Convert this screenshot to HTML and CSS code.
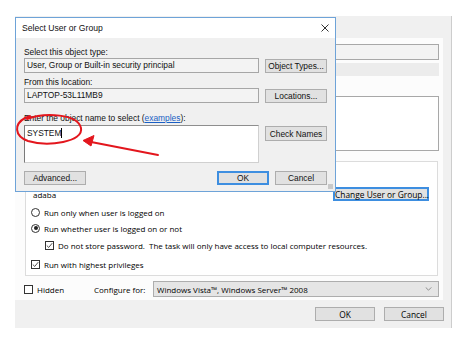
FILE: index.html
```html
<!DOCTYPE html>
<html lang="en">

<head>
    <meta charset="UTF-8">
    <title>Select User or Group</title>
    <link rel="stylesheet" href="styles.css">
</head>

<body>
    <!-- task properties window behind the picker -->
    <div class="window">
        <div class="win-top"></div>
        <div class="tabpage">
            <div class="field-row name-row">
                <span class="field-label"></span>
                <div class="textbox"></div>
            </div>
            <div class="field-row loc-row">
                <span class="field-label"></span>
                <div class="band"></div>
            </div>
            <div class="field-row author-row"></div>
            <div class="field-row desc-row">
                <span class="field-label"></span>
                <div class="textbox"></div>
            </div>

            <div class="groupbox">
                <div class="user-row">
                    <span>adaba</span>
                    <button class="btn btn-focus change-btn">Change User or Group...</button>
                </div>
                <div class="opt opt-1"><span class="radio"></span>Run only when user is logged on</div>
                <div class="opt opt-2"><span class="radio on"></span>Run whether user is logged on or not</div>
                <div class="opt opt-3 indent">
                    <span class="check">
                        <svg viewBox="0 0 9 9" width="7" height="7"><path d="M1 4.5 L3.5 7 L8 1.5" fill="none" stroke="#222" stroke-width="1"/></svg>
                    </span>Do not store password.&nbsp; The task will only have access to local computer resources.
                </div>
                <div class="opt opt-4">
                    <span class="check">
                        <svg viewBox="0 0 9 9" width="7" height="7"><path d="M1 4.5 L3.5 7 L8 1.5" fill="none" stroke="#222" stroke-width="1"/></svg>
                    </span>Run with highest privileges
                </div>
            </div>

            <div class="config-row">
                <span class="check"></span>
                <span class="hidden-label">Hidden</span>
                <span class="config-label">Configure for:</span>
                <div class="dropdown">
                    <span>Windows Vista™, Windows Server™ 2008</span>
                    <svg viewBox="0 0 8 5" width="7" height="4"><path d="M0.5 0.5 L4 4 L7.5 0.5" fill="none" stroke="#777" stroke-width="1"/></svg>
                </div>
            </div>
        </div>
        <div class="win-bottom">
            <button class="btn wide">OK</button>
            <button class="btn wide">Cancel</button>
        </div>
    </div>

    <!-- Select User or Group dialog -->
    <div class="dialog">
        <div class="dlg-title">
            <span>Select User or Group</span>
            <svg viewBox="0 0 8 8" width="8" height="8"><path d="M0.5 0.5 L7.5 7.5 M7.5 0.5 L0.5 7.5" stroke="#333" stroke-width="1"/></svg>
        </div>
        <div class="dlg-body">
            <div class="dlg-label">Select this object type:</div>
            <div class="dlg-row">
                <div class="dlg-box readonly">User, Group or Built-in security principal</div>
                <button class="btn dlg-btn">Object Types...</button>
            </div>
            <div class="dlg-label gap">From this location:</div>
            <div class="dlg-row">
                <div class="dlg-box readonly">LAPTOP-53L11MB9</div>
                <button class="btn dlg-btn">Locations...</button>
            </div>
            <div class="dlg-label gap-lg">Enter the object name to select (<a href="#">examples</a>):</div>
            <div class="dlg-row tall">
                <div class="dlg-box names">SYSTEM<span class="caret"></span></div>
                <button class="btn dlg-btn">Check Names</button>
            </div>
            <div class="dlg-actions">
                <button class="btn dlg-btn">Advanced...</button>
                <button class="btn btn-focus small-btn push">OK</button>
                <button class="btn small-btn">Cancel</button>
            </div>
        </div>
        <span class="grip"></span>
    </div>

    <!-- red hand-drawn markup -->
    <svg class="markup" viewBox="0 0 474 340" width="474" height="340">
        <path d="M27 119 C 45 112, 78 114, 81 128 C 84 142, 48 147, 28 141 C 14 136, 14 124, 25 118 L 30 116" fill="none" stroke="#e3161d" stroke-width="2" stroke-linecap="round"/>
        <path d="M158 155 L 86 141" fill="none" stroke="#e3161d" stroke-width="2" stroke-linecap="round"/>
        <path d="M83 140.5 L 94 135.5 L 91 146 Z" fill="#e3161d" stroke="#e3161d" stroke-width="1" stroke-linejoin="round"/>
    </svg>
</body>

</html>
```

FILE: styles.css
```css
body {
    margin: 0;
    background-color: #fff;
    color: #000;
    font-family: 'Open Sans', 'Noto Sans', sans-serif;
    font-size: 8px;
}

button {
    font-family: inherit;
    font-size: inherit;
    color: inherit;
    padding: 0;
    white-space: nowrap;
}

.window {
    margin: 16px 0 0 15px;
    width: 437px;
    height: 312px;
    box-sizing: border-box;
    background-color: #f0f0f0;
    border-right: 1px solid #cdcdcd;
    display: flex;
    flex-direction: column;
}

.win-top {
    height: 22px;
}

.tabpage {
    width: 428px;
    height: 262px;
    box-sizing: border-box;
    background-color: #fcfcfc;
    padding: 6px 4px 0 9px;
    display: flex;
    flex-direction: column;
}

.field-row {
    display: flex;
    align-items: center;
}

.field-label {
    width: 76px;
}

.name-row {
    height: 16px;
}

.loc-row {
    height: 13px;
    margin-top: 3px;
}

.author-row {
    height: 14px;
    margin-top: 3px;
}

.desc-row {
    height: 55px;
    margin-top: 3px;
    align-items: flex-start;
}

.textbox {
    flex: 1;
    align-self: stretch;
    border: 1px solid #a8a8a8;
    background-color: #fff;
}

.name-row .textbox {
    background-color: #f3f3f3;
}

.band {
    flex: 1;
    align-self: stretch;
    background-color: #ececec;
}

.groupbox {
    margin: 10px 1px 0 1px;
    height: 115px;
    box-sizing: border-box;
    border: 1px solid #dcdcdc;
    background-color: #fff;
    padding-top: 25px;
}

.user-row {
    display: flex;
    align-items: center;
    height: 14px;
    padding-left: 7px;
}

.change-btn {
    margin-left: auto;
    margin-right: 8px;
    width: 96px;
    height: 14px;
    font-size: 8.4px;
}

.opt {
    display: flex;
    align-items: center;
    gap: 4px;
    height: 14px;
    padding-left: 5px;
}

.opt-1 {
    margin-top: 4px;
}

.opt-2 {
    margin-top: 2px;
}

.opt-3 {
    margin-top: 3px;
}

.opt-4 {
    margin-top: 5px;
}

.indent {
    padding-left: 19px;
}

.radio {
    width: 9px;
    height: 9px;
    box-sizing: border-box;
    border: 1px solid #333;
    border-radius: 50%;
    display: flex;
    align-items: center;
    justify-content: center;
    background-color: #fff;
}

.radio.on::after {
    content: '';
    width: 4px;
    height: 4px;
    border-radius: 50%;
    background-color: #222;
}

.check {
    width: 9px;
    height: 9px;
    box-sizing: border-box;
    border: 1px solid #333;
    background-color: #fff;
    display: flex;
    align-items: center;
    justify-content: center;
}

.config-row {
    display: flex;
    align-items: center;
    height: 16px;
    margin-top: 5px;
}

.hidden-label {
    margin-left: 4px;
    width: 57px;
}

.config-label {
    width: 59px;
}

.dropdown {
    flex: 1;
    align-self: stretch;
    box-sizing: border-box;
    background-color: #e5e5e5;
    border: 1px solid #adadad;
    display: flex;
    align-items: center;
    justify-content: space-between;
    padding: 0 6px 0 3px;
}

.win-bottom {
    flex: 1;
    display: flex;
    justify-content: flex-end;
    align-items: flex-start;
    gap: 9px;
    padding: 7px 7px 0 0;
}

.btn {
    background-color: #e1e1e1;
    border: 1px solid #adadad;
    box-sizing: border-box;
}

.btn-focus {
    border: 2px solid #3d8ee0;
}

.wide {
    width: 60px;
    height: 14px;
    font-size: 8.4px;
}

/* dialog */

.dialog {
    position: absolute;
    left: 15px;
    top: 17px;
    width: 321px;
    height: 175px;
    box-sizing: border-box;
    border: 1px solid #6ea3d8;
    background-color: #f0f0f0;
    font-family: 'Liberation Sans', Arial, sans-serif;
    font-size: 8.4px;
    color: #111;
}

.dlg-title {
    height: 20px;
    background-color: #fff;
    display: flex;
    align-items: center;
    justify-content: space-between;
    padding: 0 6px;
    font-size: 8.6px;
}

.dlg-body {
    padding: 9px 8px 0 8px;
}

.dlg-label {
    height: 10px;
    line-height: 10px;
}

.dlg-label.gap {
    margin-top: 4px;
}

.dlg-label.gap-lg {
    margin-top: 10px;
}

.dlg-label a {
    color: #1a5fc4;
}

.dlg-row {
    display: flex;
    align-items: center;
    gap: 6px;
    margin-top: 1px;
    height: 15px;
}

.dlg-row.tall {
    height: 38px;
    margin-top: 2px;
    align-items: flex-start;
}

.dlg-box {
    width: 235px;
    height: 15px;
    box-sizing: border-box;
    border: 1px solid #a6a6a6;
    padding: 0 2px;
    line-height: 13px;
}

.dlg-box.readonly {
    background-color: #f3f3f3;
}

.dlg-box.names {
    height: 38px;
    background-color: #fff;
    border-color: #8e8e8e #d0d0d0 #d0d0d0 #7a7a7a;
    display: flex;
    align-items: flex-start;
    padding-top: 1px;
}

.caret {
    width: 1px;
    height: 10px;
    margin-top: 1px;
    background-color: #000;
}

.dlg-btn {
    width: 62px;
    height: 14px;
}

.dlg-row.tall .dlg-btn {
    margin-top: 1px;
    height: 15px;
}

.dlg-actions {
    display: flex;
    gap: 6px;
    margin-top: 8px;
}

.small-btn {
    width: 52px;
    height: 14px;
}

.push {
    margin-left: auto;
}

.grip {
    position: absolute;
    right: 2px;
    bottom: 2px;
    width: 5px;
    height: 5px;
    background-image: radial-gradient(#9a9a9a 0.6px, transparent 0.8px);
    background-size: 2px 2px;
}

.markup {
    position: absolute;
    left: 0;
    top: 0;
    pointer-events: none;
}
```
